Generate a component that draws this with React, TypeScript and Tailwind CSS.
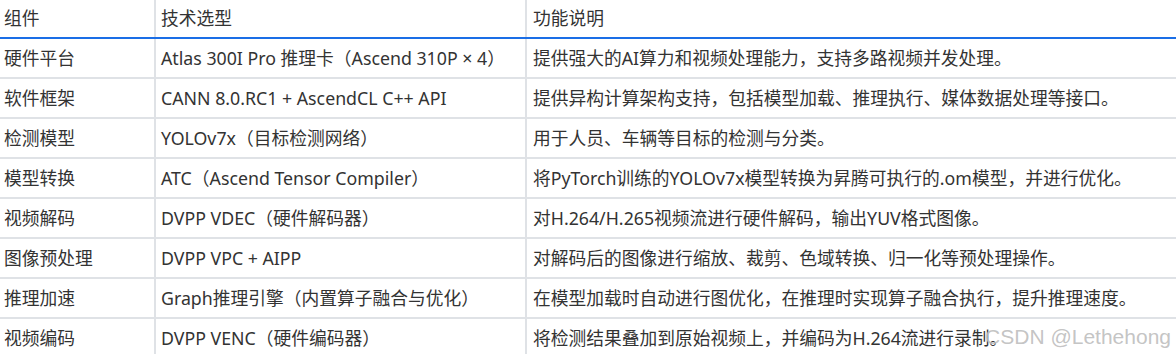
import React from 'react';

const rows: [string, string, string][] = [
    ['硬件平台', 'Atlas 300I Pro 推理卡（Ascend 310P × 4）', '提供强大的AI算力和视频处理能力，支持多路视频并发处理。'],
    ['软件框架', 'CANN 8.0.RC1 + AscendCL C++ API', '提供异构计算架构支持，包括模型加载、推理执行、媒体数据处理等接口。'],
    ['检测模型', 'YOLOv7x（目标检测网络）', '用于人员、车辆等目标的检测与分类。'],
    ['模型转换', 'ATC（Ascend Tensor Compiler）', '将PyTorch训练的YOLOv7x模型转换为昇腾可执行的.om模型，并进行优化。'],
    ['视频解码', 'DVPP VDEC（硬件解码器）', '对H.264/H.265视频流进行硬件解码，输出YUV格式图像。'],
    ['图像预处理', 'DVPP VPC + AIPP', '对解码后的图像进行缩放、裁剪、色域转换、归一化等预处理操作。'],
    ['推理加速', 'Graph推理引擎（内置算子融合与优化）', '在模型加载时自动进行图优化，在推理时实现算子融合执行，提升推理速度。'],
    ['视频编码', 'DVPP VENC（硬件编码器）', '将检测结果叠加到原始视频上，并编码为H.264流进行录制。'],
];

const Row: React.FC<{ cells: [string, string, string]; header?: boolean }> = ({ cells, header }) => (
    <div
        className={
            'grid grid-cols-[156px_371px_1fr] shrink-0 ' +
            (header ? 'h-[39px] border-b-2 border-[#1a6ee6]' : 'h-[40px] border-b-2 border-[#dfe2e6]')
        }
    >
        <div className="flex items-center pl-[4px] border-r-2 border-[#dfe2e6] whitespace-nowrap">{cells[0]}</div>
        <div className="flex items-center pl-[5px] border-r-2 border-[#dfe2e6] whitespace-nowrap">{cells[1]}</div>
        <div className="flex items-center pl-[6px] whitespace-nowrap">{cells[2]}</div>
    </div>
);

export default function App() {
    return (
        <div
            className="relative flex flex-col w-[1176px] h-[354px] overflow-hidden bg-white text-[#333] text-[17.75px]"
            style={{ fontFamily: '"Noto Sans", "Noto Sans CJK SC", sans-serif' }}
        >
            <Row header cells={['组件', '技术选型', '功能说明']} />
            {rows.map((r) => (
                <Row key={r[0]} cells={r} />
            ))}
            {/* watermark */}
            <div
                className="absolute right-[5px] bottom-[2px] text-[21px] text-[#bdbdbd]/90"
                style={{ fontFamily: '"Liberation Sans", Arial, sans-serif' }}
            >
                CSDN @Lethehong
            </div>
        </div>
    );
}
